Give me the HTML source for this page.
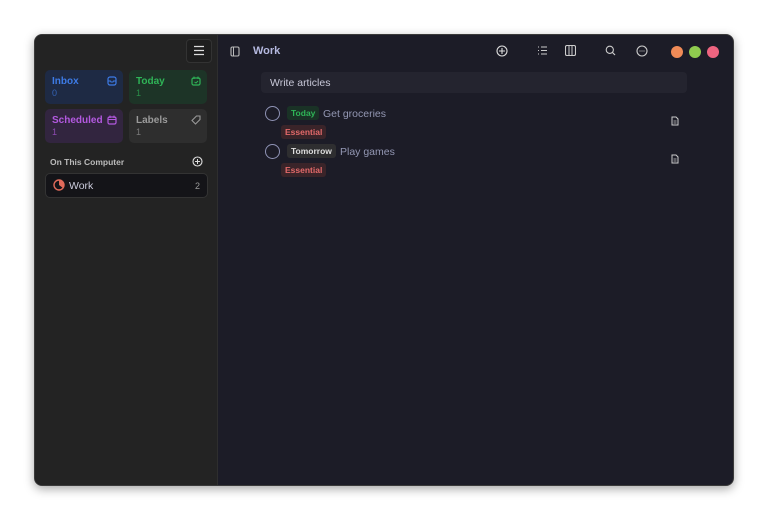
<!DOCTYPE html><html><head><style>
*{margin:0;padding:0;box-sizing:border-box}
body{width:768px;height:520px;background:#fff;font-family:"Liberation Sans",sans-serif;position:relative;overflow:hidden}
.win{position:absolute;left:34px;top:34px;width:700px;height:452px;border-radius:8px;overflow:hidden;background:#1c1c27;box-shadow:0 3px 10px rgba(0,0,0,.35);border:1px solid #3a3a3a}
.side{position:absolute;left:0;top:0;width:183px;height:100%;background:#232323;border-right:1px solid #2e2e2e}
.abs{position:absolute}
.card{position:absolute;width:78px;height:34px;border-radius:5px;font-size:10px;font-weight:bold;padding:6px 7px}
.card .n{font-weight:normal;font-size:9px;margin-top:1px;opacity:.7}
.t{font-size:10.5px}
.tag{position:absolute;font-size:8.5px;font-weight:bold;padding:2px 4px;border-radius:3px}
.circ{position:absolute;width:15px;height:15px;border:1.6px solid #8f93b5;border-radius:50%}
.dot{position:absolute;top:11px;width:12px;height:12px;border-radius:50%}
</style></head><body>
<div class="win">
<div class="side">
 <div class="abs" style="left:151px;top:4px;width:26px;height:24px;border:1px solid #333;border-radius:4px;background:#1e1e1e"></div>
 <svg class="abs" style="left:158px;top:10px" width="12" height="11"><path d="M1 1.5H11M1 5.5H11M1 9.5H11" stroke="#ddd" stroke-width="1.3"/></svg>
 <div class="card" style="left:10px;top:35px;background:#1e2a44;color:#3d7be6">Inbox<div class="n">0</div></div>
 <svg class="abs" style="left:72px;top:41px" width="10" height="10"><rect x="1" y="1" width="8" height="8" rx="2" fill="none" stroke="#3d7be6" stroke-width="1.2"/><path d="M1 5H3.5L4 6H6L6.5 5H9" fill="none" stroke="#3d7be6"/></svg>
 <div class="card" style="left:94px;top:35px;background:#1d3427;color:#2fb457">Today<div class="n">1</div></div>
 <svg class="abs" style="left:156px;top:41px" width="10" height="10"><rect x="1" y="2" width="8" height="7" rx="1.5" fill="none" stroke="#2fb457" stroke-width="1.2"/><path d="M3 0.5V3M7 0.5V3M3.5 6L5 7L7 5" fill="none" stroke="#2fb457"/></svg>
 <div class="card" style="left:10px;top:74px;background:#32253f;color:#b359e0">Scheduled<div class="n">1</div></div>
 <svg class="abs" style="left:72px;top:80px" width="10" height="10"><rect x="1" y="2" width="8" height="7" rx="1.5" fill="none" stroke="#b359e0" stroke-width="1.2"/><path d="M3 0.5V3M7 0.5V3M1 4.5H9" fill="none" stroke="#b359e0"/></svg>
 <div class="card" style="left:94px;top:74px;background:#2e2e2e;color:#9a9a9a">Labels<div class="n">1</div></div>
 <svg class="abs" style="left:156px;top:80px" width="10" height="10"><path d="M5.5 1H9V4.5L4.5 9L1 5.5Z" fill="none" stroke="#999" stroke-width="1.1"/></svg>
 <div class="abs" style="left:15px;top:122px;font-size:8.5px;font-weight:bold;color:#bbb">On This Computer</div>
 <svg class="abs" style="left:157px;top:121px" width="11" height="11"><circle cx="5.5" cy="5.5" r="4.5" fill="none" stroke="#ddd" stroke-width="1.1"/><path d="M5.5 3V8M3 5.5H8" stroke="#ddd"/></svg>
 <div class="abs" style="left:10px;top:138px;width:163px;height:25px;border:1px solid #333;border-radius:5px;background:#141418"></div>
 <svg class="abs" style="left:18px;top:144px" width="12" height="12"><circle cx="6" cy="6" r="5" fill="none" stroke="#e06a5a" stroke-width="1.4"/><path d="M6 6V1A5 5 0 0 1 10 9Z" fill="#e06a5a"/></svg>
 <div class="abs t" style="left:34px;top:145px;color:#ccd">Work</div>
 <div class="abs" style="left:160px;top:146px;font-size:9px;color:#999">2</div>
</div>
<svg class="abs" style="left:195px;top:11px" width="10" height="11"><rect x="1" y="1" width="8" height="9" rx="1.5" fill="none" stroke="#bbb" stroke-width="1.1"/><path d="M3.5 1V10" stroke="#bbb"/></svg>
<div class="abs" style="left:218px;top:10px;font-size:11px;font-weight:bold;color:#b5b9e0">Work</div>
<svg class="abs" style="left:461px;top:10px" width="12" height="12"><circle cx="6" cy="6" r="5" fill="none" stroke="#ddd" stroke-width="1.1"/><path d="M6 3V9M3 6H9" stroke="#ddd" stroke-width="1.1"/></svg>
<svg class="abs" style="left:502px;top:10px" width="11" height="11"><path d="M4 2H10M4 5.5H10M4 9H10" stroke="#ccc"/><path d="M1 2H2M1 5.5H2M1 9H2" stroke="#ccc"/></svg>
<svg class="abs" style="left:530px;top:10px" width="11" height="11"><rect x="0.5" y="0.5" width="10" height="10" rx="1.5" fill="none" stroke="#ccc" stroke-width="1.1"/><path d="M4 1V10M7 1V10" stroke="#ccc"/></svg>
<svg class="abs" style="left:570px;top:10px" width="11" height="11"><circle cx="4.8" cy="4.8" r="3.6" fill="none" stroke="#ccc" stroke-width="1.1"/><path d="M7.5 7.5L10 10" stroke="#ccc" stroke-width="1.2"/></svg>
<svg class="abs" style="left:601px;top:10px" width="12" height="12"><circle cx="6" cy="6" r="5" fill="none" stroke="#ccc" stroke-width="1.1"/><path d="M3.5 6H4.5M5.5 6H6.5M7.5 6H8.5" stroke="#ccc"/></svg>
<div class="dot" style="left:636px;background:#f08b57"></div>
<div class="dot" style="left:654px;background:#8fcb4f"></div>
<div class="dot" style="left:672px;background:#ee6480"></div>
<div class="abs" style="left:226px;top:37px;width:426px;height:21px;background:#24242f;border-radius:4px"></div>
<div class="abs t" style="left:235px;top:42px;color:#c8c8d8">Write articles</div>
<div class="circ" style="left:230px;top:71px"></div>
<div class="tag" style="left:252px;top:71px;background:#1a3226;color:#2fb457">Today</div>
<div class="abs t" style="left:288px;top:73px;color:#9397b3">Get groceries</div>
<div class="tag" style="left:246px;top:90px;background:#3a2429;color:#e46a6a">Essential</div>
<div class="circ" style="left:230px;top:109px"></div>
<div class="tag" style="left:252px;top:109px;background:#2e2e30;color:#ddd">Tomorrow</div>
<div class="abs t" style="left:305px;top:111px;color:#9397b3">Play games</div>
<div class="tag" style="left:246px;top:128px;background:#3a2429;color:#e46a6a">Essential</div>
<svg class="abs" style="left:636px;top:81px" width="8" height="10"><path d="M1 1H5L7 3V9H1Z" fill="none" stroke="#ccc"/><path d="M2.5 5H5.5M2.5 7H5.5" stroke="#ccc" stroke-width=".8"/></svg>
<svg class="abs" style="left:636px;top:119px" width="8" height="10"><path d="M1 1H5L7 3V9H1Z" fill="none" stroke="#ccc"/><path d="M2.5 5H5.5M2.5 7H5.5" stroke="#ccc" stroke-width=".8"/></svg>
</div>
</body></html>
